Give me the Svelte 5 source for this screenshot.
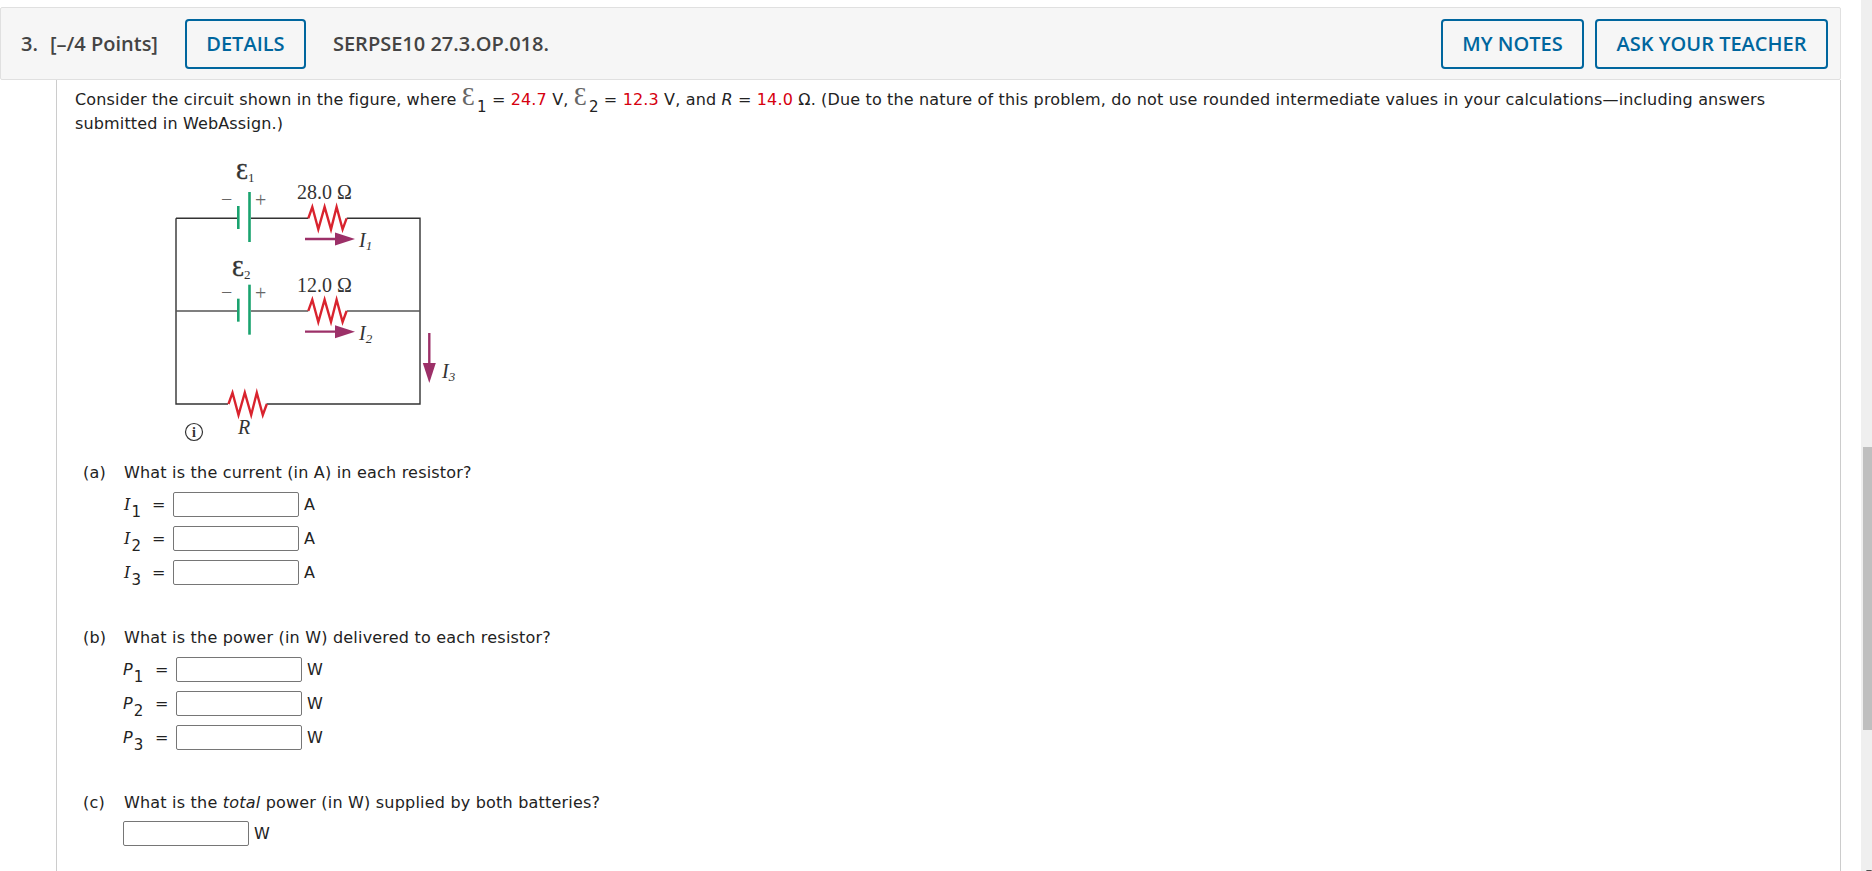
<script>
	const parts = [
		{ letter: 'a', before: 'What is the current (in A) in each resistor?', sym: 'I', serif: true, unit: 'A' },
		{ letter: 'b', before: 'What is the power (in W) delivered to each resistor?', sym: 'P', serif: false, unit: 'W' }
	];
	const branches = [
		{ y: 0, name: '1', ohms: '28.0 Ω', ex: 86, eb: 28 },
		{ y: 92.67, name: '2', ohms: '12.0 Ω', ex: 82, eb: 125 }
	];
	const zigzag = '0,0 4,-11.3 10,11 16.3,-11.3 22.7,11 28.3,-11.3 34.3,11 38.3,0';
</script>

<div class="screen">
	<div class="page">
		<header class="head">
			<span class="num">3.</span>
			<span class="points">[–/4 Points]</span>
			<button class="btn details">DETAILS</button>
			<span class="code">SERPSE10 27.3.OP.018.</span>
			<button class="btn notes">MY NOTES</button>
			<button class="btn ask">ASK YOUR TEACHER</button>
		</header>

		<section class="panel">
			<p class="question">
				Consider the circuit shown in the figure, where <span class="emf">Ɛ</span><sub>1</sub> = <span class="red">24.7</span> V, <span class="emf">Ɛ</span><sub>2</sub> = <span class="red">12.3</span> V, and <i>R</i> = <span class="red">14.0</span> Ω. (Due to the nature of this problem, do not use rounded intermediate values in your calculations—including answers<br />submitted in WebAssign.)
			</p>

			<svg class="figure" width="340" height="300" viewBox="0 0 340 300">
				<path d="M26 67.3V253H78M116.500 253H270V67.300H196.700M158.300 67.300H101M88 67.300H26" fill="none" stroke="#333" stroke-width="1.400" />
				<path d="M26 160H88M101 160H158.300M196.700 160H270" fill="none" stroke="#555" stroke-width="1.400" />
				<polyline points={zigzag} transform="translate(78.500 253)" fill="none" stroke="#d9232e" stroke-width="2.400" />

				{#each branches as b}
					<g transform="translate(0 {b.y})">
						<line x1="88.300" y1="55" x2="88.300" y2="78" stroke="#1aa36f" stroke-width="2.600" />
						<line x1="99.500" y1="41" x2="99.500" y2="91" stroke="#1aa36f" stroke-width="2.600" />
						<polyline points={zigzag} transform="translate(158.300 67.300)" fill="none" stroke="#d9232e" stroke-width="2.400" />
						<line x1="155" y1="88" x2="188" y2="88" stroke="#9c3068" stroke-width="2.400" />
						<path d="M185 81.500L205 88L185 94.500Z" fill="#9c3068" />
						<text class="fig sign" x="71" y="55">−</text>
						<text class="fig sign" x="105" y="56">+</text>
						<text class="fig" x="147" y="48">{b.ohms}</text>
						<text class="fig it" x="209" y="96">I<tspan class="tiny" dy="3">{b.name}</tspan></text>
					</g>
					<text class="fig eps" x={b.ex} y={b.eb}>Ɛ<tspan class="tiny" dy="3">{b.name}</tspan></text>
				{/each}

				<line x1="279.300" y1="182" x2="279.300" y2="214" stroke="#9c3068" stroke-width="2.400" />
				<path d="M272.800 212L285.800 212L279.300 232Z" fill="#9c3068" />
				<text class="fig it" x="292" y="227">I<tspan class="tiny" dy="3">3</tspan></text>
				<text class="fig it" x="88" y="283">R</text>
				<circle cx="44" cy="281" r="8.500" fill="none" stroke="#333" stroke-width="1.200" />
				<text class="info" x="44" y="286">i</text>
			</svg>

			{#each parts as part}
				<div class="part">
					<div class="prompt"><span class="letter">({part.letter})</span>{part.before}</div>
					{#each ['1', '2', '3'] as n}
						<div class="row">
							<span class="sym" class:serif={part.serif}>{part.sym}<sub>{n}</sub></span>
							<span class="eq">=</span>
							<span class="field"></span>
							<span class="unit">{part.unit}</span>
						</div>
					{/each}
				</div>
			{/each}

			<div class="part">
				<div class="prompt"><span class="letter">(c)</span><span>What is the <i>total</i> power (in W) supplied by both batteries?</span></div>
				<div class="row">
					<span class="field"></span>
					<span class="unit">W</span>
				</div>
			</div>
		</section>
	</div>

	<div class="scrollbar">
		<div class="thumb"></div>
		<div class="arrow"></div>
	</div>
</div>

<style>
	:global(body) {
		background: #fff;
	}

	.screen {
		display: flex;
		height: 871px;
		overflow: hidden;
		font-family: "DejaVu Sans", Verdana, sans-serif;
		font-size: 16px;
		letter-spacing: 0.2px;
		color: #222;
	}

	.page {
		flex: 1;
		padding: 7px 20px 0 0;
	}

	.head {
		display: flex;
		align-items: center;
		height: 73px;
		box-sizing: border-box;
		padding: 0 12px 0 20px;
		background: #f6f6f6;
		border: 1px solid #e0e0e0;
		border-radius: 2px;
		font-family: "Open Sans", sans-serif;
		font-size: 20px;
		font-weight: 600;
		letter-spacing: 0;
		color: #444;
	}

	.num {
		margin-right: 12px;
	}

	.points {
		margin-right: 27px;
	}

	.code {
		margin-left: 27px;
		margin-right: auto;
	}

	.btn {
		height: 50px;
		box-sizing: border-box;
		padding: 0;
		border: 2px solid #00669e;
		border-radius: 4px;
		background: transparent;
		font: inherit;
		color: #00669e;
	}

	.details {
		width: 121px;
	}

	.notes {
		width: 143px;
		margin-right: 11px;
	}

	.ask {
		width: 233px;
	}

	.panel {
		height: 800px;
		margin-left: 56px;
		box-sizing: border-box;
		padding: 8px 0 0 18px;
		border-left: 1px solid #ccc;
		border-right: 1px solid #ccc;
	}

	.question {
		margin: 0;
		height: 63px;
		line-height: 24px;
		letter-spacing: 0.15px;
		white-space: nowrap;
	}

	sub {
		font-size: 15px;
		line-height: 0;
		vertical-align: -7px;
	}

	.question sub {
		margin-left: 2px;
	}

	.emf {
		font-size: 26px;
		line-height: 0;
		color: #666;
		font-family: "Liberation Serif", serif;
	}

	.red {
		color: #d6000f;
	}

	.figure {
		display: block;
		margin: 0 0 10px 75px;
	}

	.fig {
		font-family: "Liberation Serif", serif;
		font-size: 20px;
		letter-spacing: 0;
		fill: #333;
	}

	.sign {
		fill: #666;
	}

	.it {
		font-style: italic;
	}

	.eps {
		font-size: 24px;
		stroke: #333;
		stroke-width: 0.4px;
	}

	.tiny {
		font-size: 13px;
		stroke: none;
	}

	.info {
		font-family: "Liberation Serif", serif;
		font-size: 14px;
		font-weight: 700;
		text-anchor: middle;
		fill: #333;
	}

	.part {
		margin-bottom: 36px;
		padding-left: 8px;
	}

	.prompt {
		display: flex;
		line-height: 24px;
		margin-bottom: 2px;
		white-space: pre-wrap;
	}

	.letter {
		width: 41px;
	}

	.row {
		display: flex;
		align-items: center;
		height: 34.3px;
		padding-left: 40px;
	}

	.sym {
		font-style: italic;
		width: 32px;
		font-size: 16px;
	}

	.serif {
		width: 29px;
		box-sizing: border-box;
		padding-left: 1px;
		font-family: "DejaVu Serif", serif;
	}

	.sym sub {
		margin-left: 1px;
		font-style: normal;
		font-family: "DejaVu Sans", sans-serif;
	}

	.eq {
		width: 21px;
	}

	.field {
		width: 126px;
		height: 25px;
		box-sizing: border-box;
		background: #fff;
		border: 1px solid #767676;
		border-radius: 2px;
	}

	.unit {
		margin-left: 5px;
	}

	.scrollbar {
		position: relative;
		width: 11px;
		background: #efefef;
	}

	.thumb {
		margin: 447px 0 0 2px;
		height: 283px;
		background: #bfbfbf;
	}

	.arrow {
		position: absolute;
		right: 0;
		bottom: -3px;
		border-left: 3px solid transparent;
		border-right: 3px solid transparent;
		border-top: 4px solid #505050;
	}
</style>
